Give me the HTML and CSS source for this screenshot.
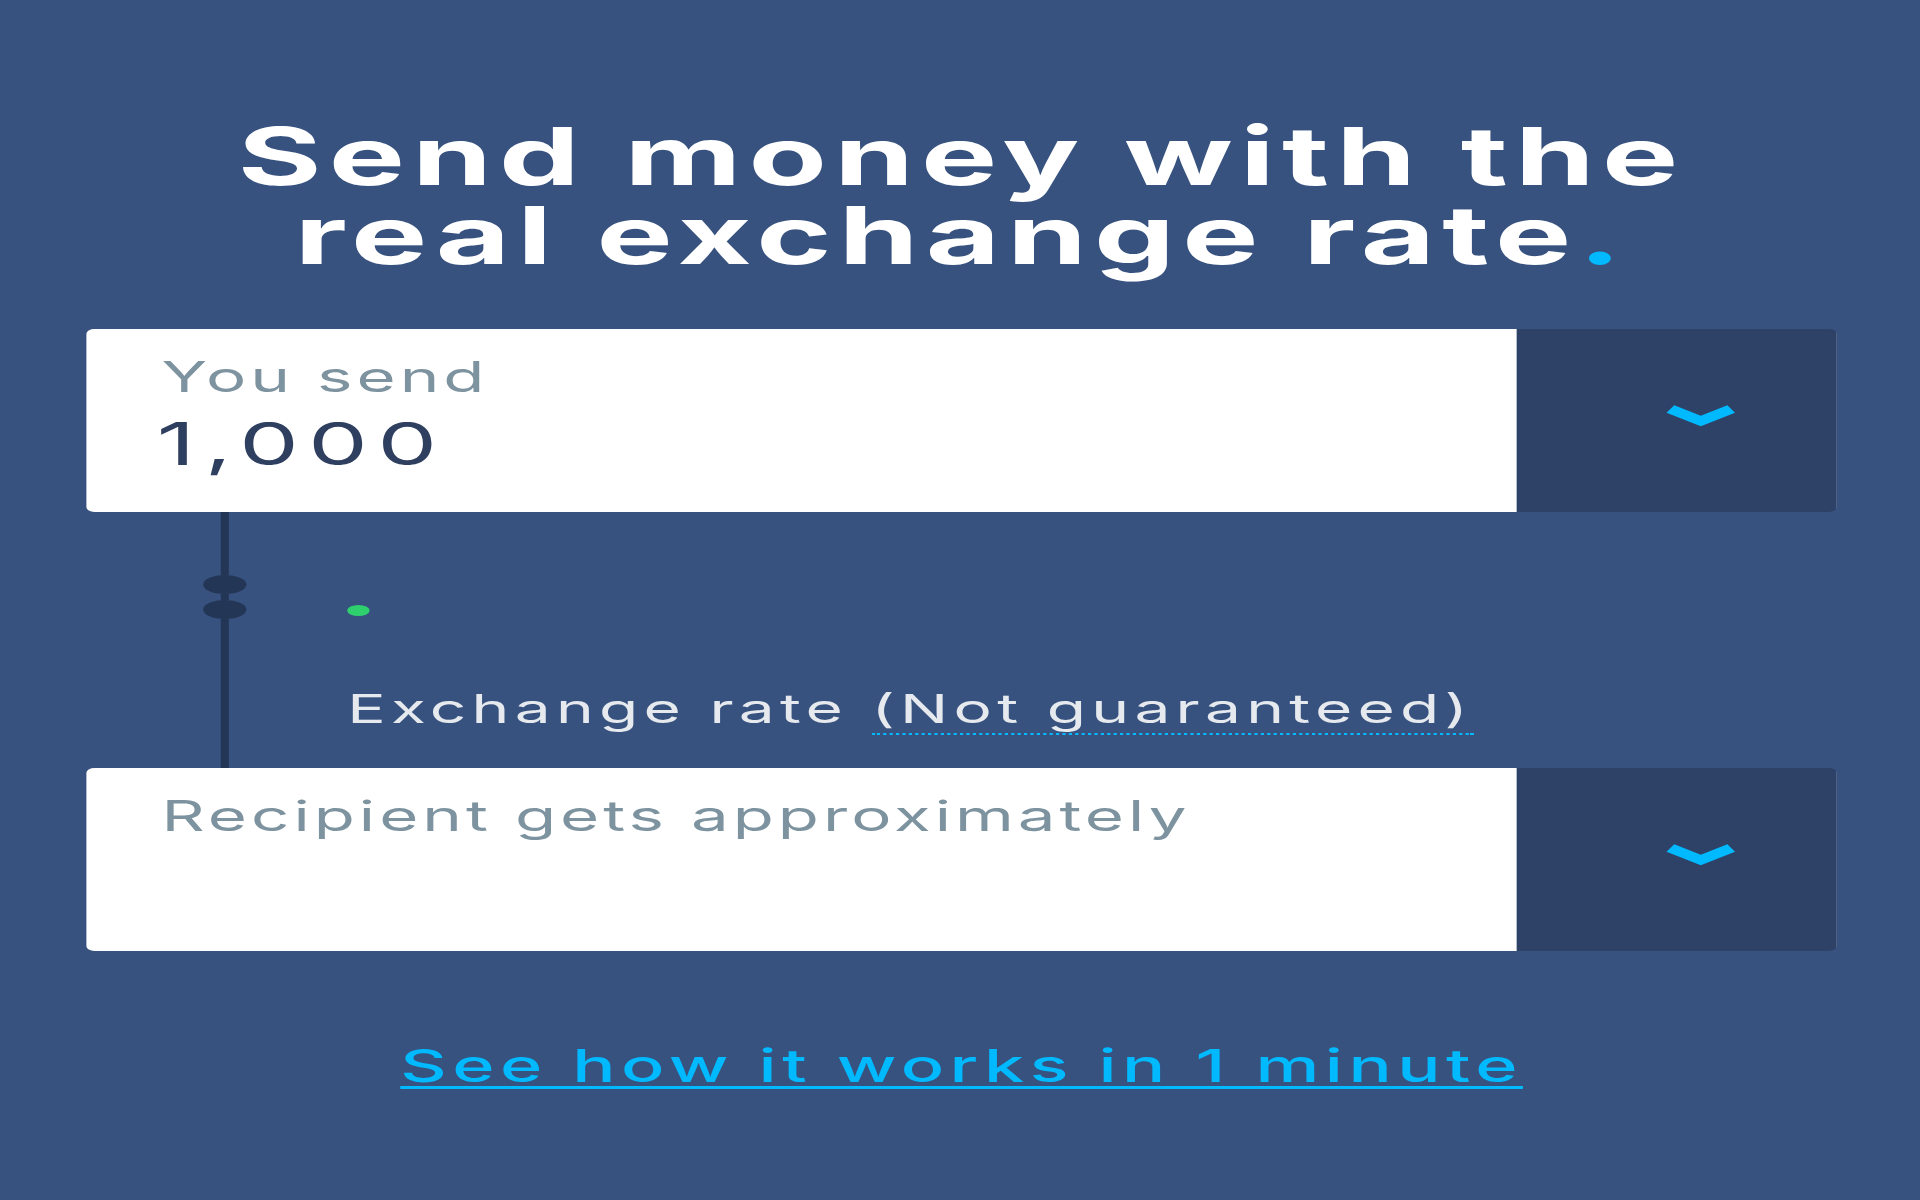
FILE: index.html
```html
<!DOCTYPE html>
<html lang="en">
<head>
    <meta charset="UTF-8">
    <meta name="viewport" content="width=device-width, initial-scale=1.0">
    <title>Send money</title>
    <link rel="stylesheet" href="styles.css">
</head>
<body>
    <div class="page">
        <h1 class="headline">Send money with the<br>real exchange rate<span class="dot">.</span></h1>

        <div class="field">
            <div class="field-main">
                <div class="field-label">You send</div>
                <div class="field-amount">1,000</div>
            </div>
            <div class="currency">
                <svg class="chevron" viewBox="0 0 44 24" width="44" height="24">
                    <polyline points="3,5 22,17 41,5" fill="none" stroke="#00b9ff" stroke-width="9"/>
                </svg>
            </div>
        </div>

        <div class="rate-block">
            <div class="track">
                <div class="seg seg-top"></div>
                <div class="knob"></div>
                <div class="seg seg-mid"></div>
                <div class="knob"></div>
                <div class="seg seg-rest"></div>
            </div>
            <div class="rate-info">
                <div class="live-dot"></div>
                <div class="rate-text">Exchange rate <span class="hint">(Not guaranteed)</span></div>
            </div>
        </div>

        <div class="field">
            <div class="field-main">
                <div class="field-label">Recipient gets approximately</div>
            </div>
            <div class="currency">
                <svg class="chevron" viewBox="0 0 44 24" width="44" height="24">
                    <polyline points="3,5 22,17 41,5" fill="none" stroke="#00b9ff" stroke-width="9"/>
                </svg>
            </div>
        </div>

        <div class="footer">
            <a class="how-link" href="#">See how it works in 1 minute</a>
        </div>
    </div>
</body>
</html>
```

FILE: styles.css
```css
html, body {
    margin: 0;
    height: 100%;
    overflow: hidden;
    background-color: #37527f;
}
body {
    font-family: Inter, "Liberation Sans", sans-serif;
}
/* the screenshot is stretched sideways, so the page is laid out narrow and widened */
.page {
    width: 1200px;
    height: 1200px;
    box-sizing: border-box;
    padding: 0 52px 0 54px;
    transform: scaleX(1.6);
    transform-origin: 0 0;
}
.headline {
    margin: 0;
    padding-top: 116px;
    color: #fff;
    font-size: 80px;
    font-weight: 700;
    line-height: 79px;
    letter-spacing: 4.5px;
    text-align: center;
}
.dot {
    color: #00b9ff;
}
.field {
    display: flex;
    height: 183px;
    margin-top: 55px;
    border-radius: 5px;
    overflow: hidden;
}
.rate-block + .field {
    margin-top: 0;
}
.field-main {
    flex: 1;
    background-color: #fff;
    padding: 23px 0 0 47px;
}
.field-label {
    color: #7d939f;
    font-size: 42px;
    line-height: 50px;
    letter-spacing: 2.5px;
}
.field-amount {
    margin: 10px 0 0 -3px;
    color: #2e3f5f;
    font-size: 59px;
    line-height: 64px;
    letter-spacing: 6px;
}
.currency {
    width: 200px;
    background-color: #2e4268;
    display: flex;
    align-items: center;
    justify-content: center;
    padding: 0 0 10px 30px;
    box-sizing: border-box;
}
.chevron {
    display: block;
}
.rate-block {
    display: flex;
    height: 256px;
    padding-left: 73px;
}
.track {
    width: 27px;
    display: flex;
    flex-direction: column;
    align-items: center;
}
.seg {
    width: 5px;
    background-color: #243656;
}
.seg-top {
    height: 63px;
}
.seg-mid {
    height: 6px;
}
.seg-rest {
    flex: 1;
}
.knob {
    width: 27px;
    height: 19px;
    border-radius: 50%;
    background-color: #243656;
}
.rate-info {
    margin-left: 63px;
    display: flex;
    flex-direction: column;
    align-items: flex-start;
}
.live-dot {
    margin-top: 93px;
    width: 14px;
    height: 11px;
    border-radius: 50%;
    background-color: #2ed06e;
}
.rate-text {
    margin-top: 69px;
    color: #e6e9ee;
    font-size: 40px;
    line-height: 48px;
    letter-spacing: 3.3px;
}
.hint {
    border-bottom: 2px dotted #00b9ff;
}
.footer {
    text-align: center;
    padding-top: 88px;
}
.how-link {
    color: #00b9ff;
    font-size: 45px;
    font-weight: 500;
    line-height: 54px;
    letter-spacing: 3.4px;
    text-decoration: underline;
    text-decoration-thickness: 3px;
    text-underline-offset: 4px;
}
```
